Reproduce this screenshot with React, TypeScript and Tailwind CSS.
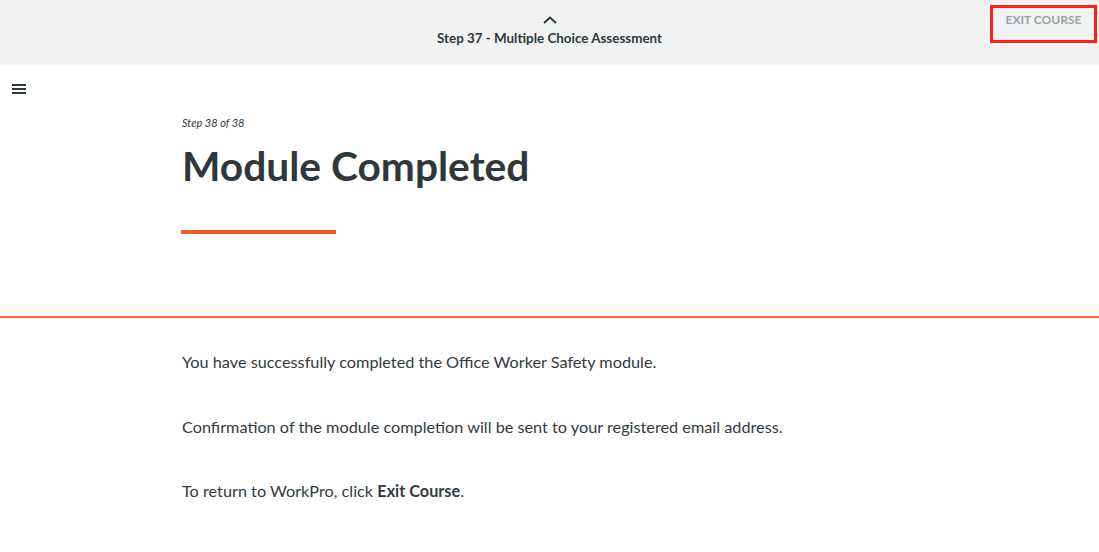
import React from 'react';

const App = () => {
  return (
    <div className="min-h-screen w-full bg-white" style={{ fontFamily: 'Lato, "Open Sans", sans-serif' }}>
      {/* top bar */}
      <header className="relative flex h-[65px] w-full flex-col items-center bg-[#f1f2f2] pt-[15px]">
        <svg width="16" height="10" viewBox="0 0 16 10" className="text-[#2d373c]">
          <path d="M2 8 L8 2.5 L14 8" fill="none" stroke="currentColor" strokeWidth="2" />
        </svg>
        <div className="mt-[4px] text-[13.4px] font-bold leading-[18px] text-[#2d373c]">
          Step 37 - Multiple Choice Assessment
        </div>
        <button className="absolute right-[2px] top-[5px] flex h-[38px] w-[107px] justify-center border-[3px] border-[#ff1f1a] pt-[4px] text-[12px] font-bold leading-[16px] text-[#9aa1a5]">
          EXIT COURSE
        </button>
      </header>

      <div className="flex pl-[12px] pt-[19px]">
        <svg width="14" height="10" viewBox="0 0 14 10" className="text-[#2d373c]">
          <rect x="0" y="0" width="14" height="2" fill="currentColor" />
          <rect x="0" y="4" width="14" height="2" fill="currentColor" />
          <rect x="0" y="8" width="14" height="2" fill="currentColor" />
        </svg>
      </div>

      <section className="pl-[182px] pt-[22px]">
        <div className="text-[11px] italic leading-[14px] text-[#2d373c]">Step 38 of 38</div>
        <h1 className="mt-[12px] text-[40.7px] font-bold leading-[48px] text-[#2d373c]">Module Completed</h1>
        <div className="ml-[-1px] mt-[40px] h-[4px] w-[155px] bg-[#f05a28]" />
      </section>

      <div className="mt-[82px] h-[2px] w-full bg-[#ff6a3d]" />

      <section className="flex flex-col gap-[44.5px] pl-[182px] pt-[34px] text-[16.25px] leading-[20px] text-[#333a3e]">
        <p>You have successfully completed the Office Worker Safety module.</p>
        <p>Confirmation of the module completion will be sent to your registered email address.</p>
        <p>
          To return to WorkPro, click <b className="font-bold">Exit Course</b>.
        </p>
      </section>
    </div>
  );
};

export default App;
